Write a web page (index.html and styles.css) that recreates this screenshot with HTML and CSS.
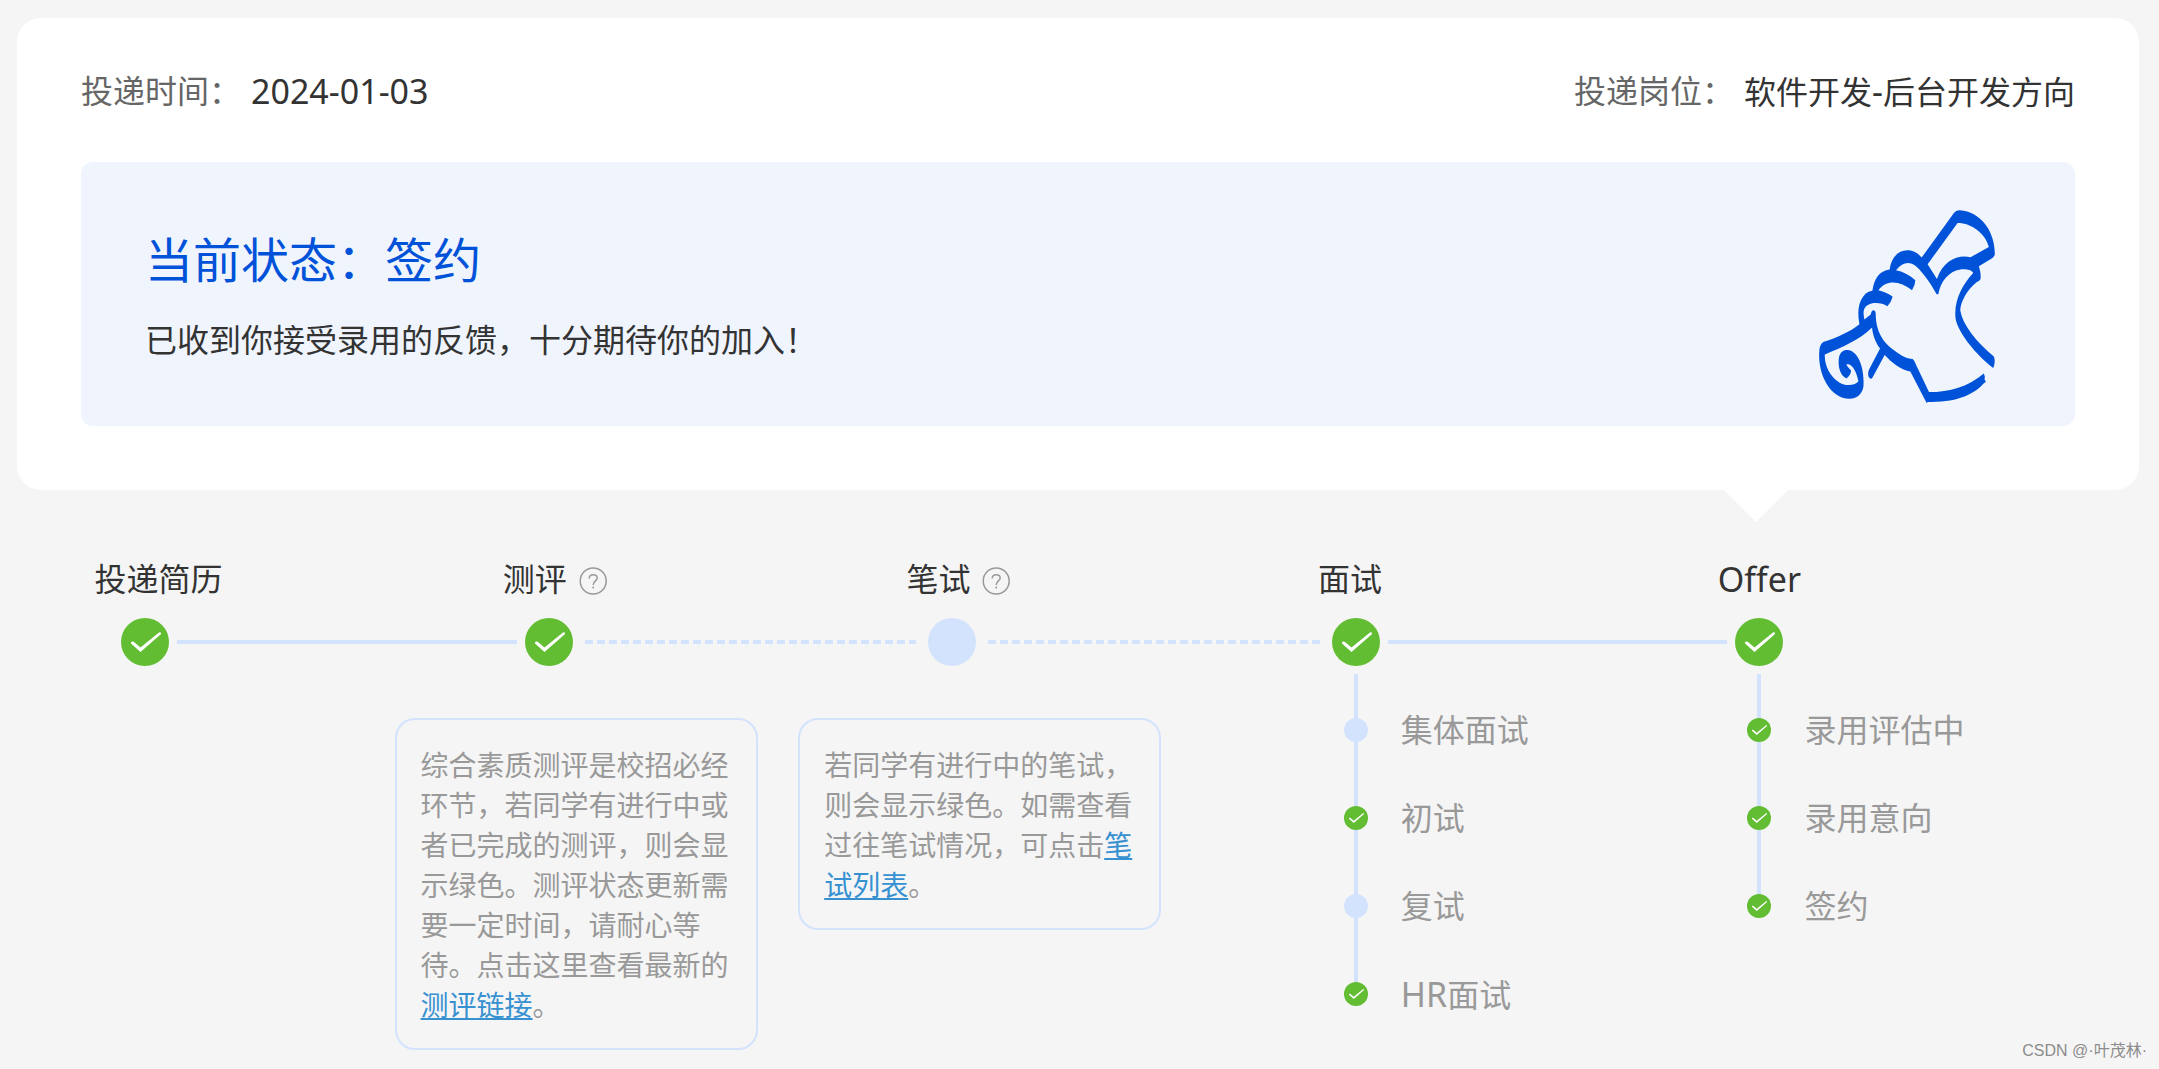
FILE: index.html
```html
<!DOCTYPE html>
<html lang="zh-CN">
<head>
<meta charset="utf-8">
<meta name="viewport" content="width=device-width, initial-scale=1">
<title>投递进度</title>
<link rel="stylesheet" href="styles.css">
</head>
<body>
<svg class="sprite" aria-hidden="true">
  <symbol id="check" viewBox="0 0 48 48">
    <path d="M10 25.500Q9.500 24 11 23.500Q12.300 23.300 13 24L19.500 29.500L38 14.500Q39.500 13.600 40 15Q40.200 16 39.500 16.600L19.500 34Z" fill="#fff"/>
  </symbol>
</svg>
<main class="page">
  <section class="card">
    <dl class="meta">
      <div class="meta-item"><dt>投递时间：</dt><dd class="latin">2024-01-03</dd></div>
      <div class="meta-item"><dt>投递岗位：</dt><dd>软件开发<span class="latin">-</span>后台开发方向</dd></div>
    </dl>
    <div class="banner">
      <div class="banner-text">
        <h1>当前状态：签约</h1>
        <p>已收到你接受录用的反馈，十分期待你的加入！</p>
      </div>
      <svg class="hand" viewBox="117 59 528 580" aria-hidden="true">
        <path fill-rule="evenodd" d="M425 202L522 68Q528 59 540 60C600 64 645 120 645 192Q644 199 638 203L597 228Q604 250 602 266Q600 272 590 276C562 298 542 335 541 360C548 405 590 455 642 499Q648 515 640 534C590 495 535 430 527 385C521 335 545 285 580 248C575 238 560 236 545 237C505 242 482 275 475 312L470 312C452 280 432 250 408 228C388 212 368 215 348 240C368 244 388 254 406 270Q406 285 396 300C362 274 322 265 295 300C312 304 328 311 338 320Q334 336 322 348C305 338 280 335 262 345C248 354 249 370 253 388L272 373Q274 360 281 360Q288 362 287 375C288 420 305 455 345 483C365 498 380 506 398 507Q404 512 407 522L447 606C510 606 565 590 612 550L615 560L614 568L618 576L612 580C585 612 530 639 443 636L440 639L391 544C365 542 335 518 314 495L277 563Q272 570 266 561Q262 550 267 538L300 475C285 455 277 430 276 412C240 448 190 470 134 493C132 540 168 585 205 585Q228 585 235 574C230 545 215 518 199 523Q200 528 213 541Q212 555 199 565C180 555 172 530 177 500C182 485 190 480 202 480C235 482 254 535 250 590C245 615 230 625 208 626C150 625 115 555 117 490Q117 462 131 455C170 442 210 425 238 402C232 370 233 340 250 318C258 307 268 303 277 302C282 265 298 242 329 238C333 205 352 180 382 180C402 180 415 190 425 202ZM443 222L471 266C490 210 535 192 572 201L627 170C617 130 575 98 533 98Z"/>
      </svg>
    </div>
  </section>

  <ol class="steps">
    <li class="step">
      <h2 class="step-title">投递简历</h2>
      <div class="track"><span class="node done"><svg><use href="#check"/></svg></span><span class="line"></span></div>
    </li>
    <li class="step">
      <h2 class="step-title">测评<button class="help" type="button" aria-label="测评说明"><svg viewBox="0 0 28 28"><circle cx="14" cy="14" r="13"/><path d="M10 11.500C10 6.500 18 6.500 18 11C18 14 14 14 14 18"/><circle class="dot" cx="14" cy="20.500" r="1"/></svg></button></h2>
      <div class="track"><span class="node done"><svg><use href="#check"/></svg></span><span class="line dashed"></span></div>
      <p class="tip">综合素质测评是校招必经环节，若同学有进行中或者已完成的测评，则会显示绿色。测评状态更新需要一定时间，请耐心等待。点击这里查看最新的<a href="#assessment">测评链接</a>。</p>
    </li>
    <li class="step">
      <h2 class="step-title">笔试<button class="help" type="button" aria-label="笔试说明"><svg viewBox="0 0 28 28"><circle cx="14" cy="14" r="13"/><path d="M10 11.500C10 6.500 18 6.500 18 11C18 14 14 14 14 18"/><circle class="dot" cx="14" cy="20.500" r="1"/></svg></button></h2>
      <div class="track"><span class="node"></span><span class="line dashed"></span></div>
      <p class="tip">若同学有进行中的笔试，则会显示绿色。如需查看过往笔试情况，可点击<a href="#exams">笔试列表</a>。</p>
    </li>
    <li class="step">
      <h2 class="step-title">面试</h2>
      <div class="track"><span class="node done"><svg><use href="#check"/></svg></span><span class="line"></span></div>
      <ul class="substeps">
        <li><span class="dot-node"></span><span>集体面试</span></li>
        <li><span class="dot-node done"><svg><use href="#check"/></svg></span><span>初试</span></li>
        <li><span class="dot-node"></span><span>复试</span></li>
        <li><span class="dot-node done"><svg><use href="#check"/></svg></span><span><span class="latin">HR</span>面试</span></li>
      </ul>
    </li>
    <li class="step current">
      <h2 class="step-title latin">Offer</h2>
      <div class="track"><span class="node done"><svg><use href="#check"/></svg></span></div>
      <ul class="substeps">
        <li><span class="dot-node done"><svg><use href="#check"/></svg></span><span>录用评估中</span></li>
        <li><span class="dot-node done"><svg><use href="#check"/></svg></span><span>录用意向</span></li>
        <li><span class="dot-node done"><svg><use href="#check"/></svg></span><span>签约</span></li>
      </ul>
    </li>
  </ol>
</main>
<div class="watermark">CSDN @·叶茂林·</div>
</body>
</html>
```
FILE: styles.css
```css
* {
  box-sizing: border-box;
  margin: 0;
  padding: 0;
}

body {
  background: #f5f5f5;
  color: #333;
  font-family: "Noto Sans", "Noto Sans CJK SC", sans-serif;
  font-size: 32px;
  line-height: 48px;
}

ol,
ul {
  list-style: none;
}

h1,
h2 {
  font-weight: inherit;
}

.sprite {
  position: absolute;
  width: 0;
  height: 0;
}

.page {
  padding: 18px 20px 0 17px;
}

.card {
  padding: 49px 64px 64px;
  border-radius: 24px;
  background: #fff;
}

.meta {
  display: flex;
  justify-content: space-between;
  height: 48px;
  margin-bottom: 47px;
}

.meta-item {
  display: flex;
  gap: 10px;
}

.meta dt {
  color: #666;
}

.banner {
  display: flex;
  justify-content: space-between;
  align-items: flex-start;
  padding: 48px 80px 23px 64px;
  border-radius: 12px;
  background: #eff4fd;
}

.banner-text {
  padding-top: 14px;
}

.banner h1 {
  margin-bottom: 20px;
  color: #0052d9;
  font-size: 48px;
  line-height: 72px;
}

.hand {
  width: 176px;
  height: 193px;
  fill: #0052d9;
}

.steps {
  display: grid;
  grid-template-columns: repeat(5, minmax(0, 1fr));
  padding: 65px 40px 0 64px;
}

.step {
  position: relative;
}

.step-title {
  display: flex;
  align-items: center;
  width: max-content;
  height: 48px;
  margin-left: 39px;
  font-size: 32px;
  transform: translateX(-20%);
}

/* Latin runs are set a little larger to balance the Chinese glyphs */
.latin {
  font-size: 34px;
}

/* Pointer that ties the card to the current step */
.current::before {
  content: "";
  position: absolute;
  top: -65px;
  left: 29px;
  border: 32px solid transparent;
  border-top-color: #fff;
  border-bottom-width: 0;
}

.help {
  width: 28px;
  height: 28px;
  margin: 4px 0 0 12px;
  border: 0;
  background: none;
  cursor: pointer;
}

.help svg {
  display: block;
  width: 28px;
  height: 28px;
  fill: none;
  stroke: #999;
  stroke-width: 1.5;
}

.help .dot {
  fill: #999;
  stroke: none;
}

.track {
  display: flex;
  align-items: center;
  height: 48px;
  margin: 15px -32px 0 40px;
}

.node {
  flex: none;
  width: 48px;
  height: 48px;
  border-radius: 50%;
  background: #d3e3fd;
}

.node.done,
.dot-node.done {
  background: #62bd32;
}

.node svg,
.dot-node svg {
  display: block;
  width: 100%;
  height: 100%;
}

.line {
  flex: 1;
  height: 4px;
  margin: 0 0 0 8px;
  background: #d3e3fd;
}

.line.dashed {
  margin: 0 4px 0 12px;
  background: repeating-linear-gradient(90deg, #d3e3fd 0 8px, transparent 8px 12px);
}

.tip {
  width: 90%;
  margin: 52px 0 0 -90px;
  padding: 25px 24px 23px;
  border: 2px solid #d3e3fd;
  border-radius: 20px;
  color: #999;
  font-size: 28px;
  line-height: 40px;
}

.tip a {
  color: #3791d1;
}

.substeps {
  display: flex;
  flex-direction: column;
  gap: 40px;
  margin: 8px 0 0 52px;
  padding-top: 32px;
  color: #999;
  background: linear-gradient(#d3e3fd, #d3e3fd) 10px 0 / 4px calc(100% - 24px) no-repeat;
}

.substeps li {
  display: flex;
  align-items: center;
  gap: 33px;
  height: 48px;
}

.dot-node {
  flex: none;
  width: 24px;
  height: 24px;
  border-radius: 50%;
  background: #d3e3fd;
}

.watermark {
  position: absolute;
  right: 12px;
  bottom: 6px;
  color: #8c8c8c;
  font: 16px/24px "Liberation Sans", "Noto Sans CJK SC", sans-serif;
}
```
